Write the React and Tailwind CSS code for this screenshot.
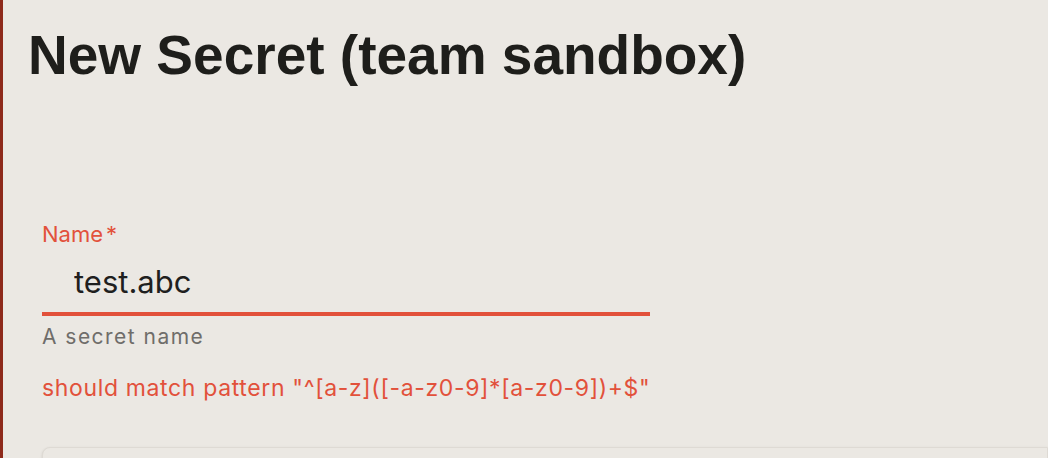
export default function App() {
  return (
    <div className="min-h-screen h-[458px] overflow-hidden bg-[#ebe8e3] border-l-[3px] border-[#8e2a1b]">
      {/* Header */}
      <div className="pl-[25px] pt-[22px]">
        <h1 className="font-['Liberation_Sans',Arial,sans-serif] font-bold text-[55px] leading-[66px] text-[#1e1e1b]">
          New Secret (team sandbox)
        </h1>
      </div>

      {/* Form */}
      <div className="pl-[39px] pt-[134px] font-['Inter',sans-serif]">
        <div className="w-[608px]">
          <label className="block text-[22px] leading-[24px] text-[#e2513b]">
            Name<span className="ml-[3px]">*</span>
          </label>
          <div className="mt-[18px] border-b-4 border-[#e2513b] pl-[32px] pb-[12px]">
            <input
              className="w-full bg-transparent outline-none text-[31px] leading-[36px] text-[#1f1f1f]"
              defaultValue="test.abc"
            />
          </div>
          <p className="mt-[8px] text-[21px] leading-[26px] tracking-[0.07em] text-[#6f6d6a]">
            A secret name
          </p>
          <p className="mt-[24px] text-[23px] leading-[28px] tracking-[0.028em] text-[#e2513b] whitespace-nowrap">
            should match pattern "^[a-z]([-a-z0-9]*[a-z0-9])+$"
          </p>
        </div>
        <div className="mt-[45px] h-[80px] rounded-tl-lg border border-[#dedad4] bg-[#ebe8e3] shadow-sm" />
      </div>
    </div>
  );
}
